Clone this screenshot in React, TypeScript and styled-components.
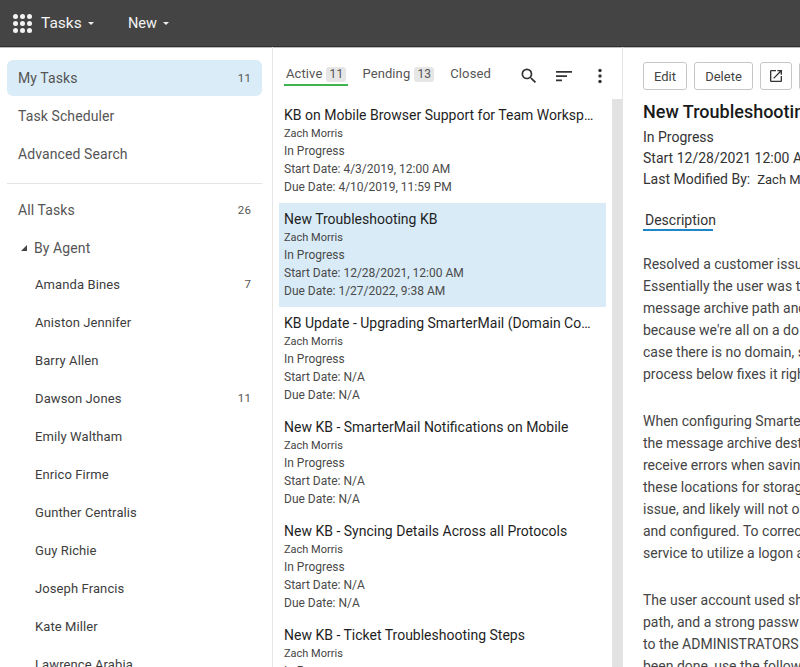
import React from "react";
import styled, { createGlobalStyle } from "styled-components";

const Global = createGlobalStyle`
  html, body { margin: 0; padding: 0; height: 100%; overflow: hidden; background: #fff; }
  body { font-family: Roboto, "Liberation Sans", sans-serif; }
  #root { height: 100%; }
  * { box-sizing: border-box; }
`;

const Page = styled.div`
  width: 800px; height: 667px; display: flex; flex-direction: column; overflow: hidden;
`;
const TopBar = styled.header`
  height: 47px; flex: none; background: #444; border-bottom: 1px solid #2f2f2f; box-shadow: 0 1px 0 #bbb;
  display: flex; align-items: center; padding-left: 13px; color: #fff;
`;
const Waffle = styled.svg`width: 19px; height: 19px; fill: #f2f2f2; margin-right: 9px;`;
const Menu = styled.div<{ $size: number; $width: number }>`
  display: flex; align-items: center; font-size: ${p => p.$size}px; width: ${p => p.$width}px; gap: 6px; color: #f4f4f4;
  &::after { content: ""; border: 3.5px solid transparent; border-top-color: #eee; border-bottom: 0; margin-top: 1px; }
`;
const Body = styled.div`flex: 1; display: flex; min-height: 0;`;

const Side = styled.aside`
  width: 273px; flex: none; border-right: 1px solid #e6e6e6; padding: 13px 10px 0 7px; overflow: hidden;
`;
const NavItem = styled.div<{ $active?: boolean; $indent?: number }>`
  height: 38px; display: flex; align-items: center; justify-content: space-between; flex: none;
  padding: 0 11px 0 ${p => p.$indent ?? 11}px; font-size: 14px; letter-spacing: 0.1px;
  color: #555;
  ${p => p.$active && `background: #d9ecf7; border-radius: 6px; height: 36px; margin-bottom: 1px;`}
`;
const AgentItem = styled(NavItem)`
  font-size: 13px; color: #3d3d3d; padding-left: 28px;
`;
const AgentGroup = styled.div`margin-top: -2px;`;
const Count = styled.span`font-size: 11.5px; color: #555;`;
const Divider = styled.hr`border: 0; border-top: 1px solid #e4e4e4; margin: 10px 0 7px;`;
const AgentLabel = styled.span`display: inline-flex; align-items: center; gap: 7px;`;
const Tri = styled.svg`width: 6px; height: 6px; fill: #444;`;

const ListPane = styled.section`
  width: 350px; flex: none; border-right: 1px solid #e6e6e6; display: flex; flex-direction: column; min-height: 0; position: relative;
`;
const TabsRow = styled.div`height: 52px; flex: none; display: flex; align-items: flex-start; padding: 19px 0 0 11px;`;
const Tab = styled.div<{ $active?: boolean; $gap: number }>`
  height: 20px; display: flex; align-items: flex-start; gap: 4px; padding: 0 2px; margin-right: ${p => p.$gap}px;
  font-size: 13px; line-height: 15px; letter-spacing: 0.1px; color: #555;
  border-bottom: 2px solid ${p => (p.$active ? "#3fb34f" : "transparent")};
`;
const TabCount = styled.span`
  background: #e6e6e6; border-radius: 3px; font-size: 12px; line-height: 15px; color: #555; width: 20px; text-align: center; margin-top: 1px;
`;
const Tools = styled.div`display: flex; align-items: center; margin-left: auto; padding-right: 12px;`;
const ToolIcon = styled.svg<{ $mr: number }>`width: 20px; height: 20px; fill: #333; display: block; margin-right: ${p => p.$mr}px;`;
const Rows = styled.div`flex: 1; overflow: hidden; padding: 0 16px 0 6px;`;
const Row = styled.article<{ $sel?: boolean }>`
  height: 104px; padding: 7px 10px 0 5px; background: ${p => (p.$sel ? "#d8ebf7" : "transparent")};
`;
const RowTitle = styled.div`font-size: 14px; line-height: 19px; color: #1f1f1f; white-space: nowrap; overflow: hidden; text-overflow: ellipsis;`;
const RowName = styled.div`font-size: 11px; line-height: 17px; color: #444;`;
const RowLine = styled.div`font-size: 12px; line-height: 18px; color: #4a4a4a;`;
const Track = styled.div`position: absolute; right: 0; top: 52px; bottom: 0; width: 10px; background: #e2e2e2;`;

const Detail = styled.section`flex: 1; min-width: 0; padding: 15px 0 0 20px; overflow: hidden;`;
const Buttons = styled.div`display: flex; gap: 7px; height: 28px;`;
const Btn = styled.button<{ $w: number }>`
  flex: none; width: ${p => p.$w}px; height: 28px; background: #fff; border: 1px solid #c6c6c6; border-radius: 3px; padding: 0;
  font: 400 13px Roboto, sans-serif; color: #444; display: flex; align-items: center; justify-content: center;
`;
const OpenIcon = styled.svg`width: 16px; height: 16px; fill: #333;`;
const Title = styled.h1`margin: 11px 0 0; font-size: 18px; line-height: 22px; font-weight: 500; color: #1a1a1a; white-space: nowrap;`;
const Meta = styled.div`font-size: 14px; line-height: 21px; color: #333; white-space: nowrap;`;
const MetaFirst = styled(Meta)`margin-top: 4px;`;
const Value = styled.span`margin-left: 7px; font-size: 13px;`;
const DescTab = styled.div`
  margin: 21px 0 22px; width: 70px; height: 20px; padding-left: 2px; font-size: 14px; line-height: 18px; color: #333; border-bottom: 2px solid #1f86c9; white-space: nowrap;
`;
const Para = styled.div`margin-bottom: 25px;`;
const ParaLine = styled.div`font-size: 14px; line-height: 22px; color: #444; white-space: nowrap;`;

const agents: [string, string?][] = [
  ["Amanda Bines", "7"], ["Aniston Jennifer"], ["Barry Allen"], ["Dawson Jones", "11"], ["Emily Waltham"],
  ["Enrico Firme"], ["Gunther Centralis"], ["Guy Richie"], ["Joseph Francis"], ["Kate Miller"], ["Lawrence Arabia"],
];
const tasks = [
  { t: "KB on Mobile Browser Support for Team Workspaces", s: "Start Date: 4/3/2019, 12:00 AM", d: "Due Date: 4/10/2019, 11:59 PM" },
  { t: "New Troubleshooting KB", s: "Start Date: 12/28/2021, 12:00 AM", d: "Due Date: 1/27/2022, 9:38 AM", sel: true },
  { t: "KB Update - Upgrading SmarterMail (Domain Controllers)", s: "Start Date: N/A", d: "Due Date: N/A" },
  { t: "New KB - SmarterMail Notifications on Mobile", s: "Start Date: N/A", d: "Due Date: N/A" },
  { t: "New KB - Syncing Details Across all Protocols", s: "Start Date: N/A", d: "Due Date: N/A" },
  { t: "New KB - Ticket Troubleshooting Steps", s: "Start Date: N/A", d: "Due Date: N/A" },
];
const paragraphs = [
  ["Resolved a customer issue", "Essentially the user was t", "message archive path and", "because we're all on a do", "case there is no domain, s", "process below fixes it righ"],
  ["When configuring Smarte", "the message archive dest", "receive errors when savin", "these locations for storag", "issue, and likely will not o", "and configured. To correc", "service to utilize a logon a"],
  ["The user account used sh", "path, and a strong passw", "to the ADMINISTRATORS", "been done, use the follow"],
];

export default function App() {
  return (
    <Page>
      <Global />
      <TopBar>
        <Waffle viewBox="0 0 19 19">
          {[2.5, 9.5, 16.5].flatMap(y => [2.5, 9.5, 16.5].map(x => <circle key={`${x}-${y}`} cx={x} cy={y} r="2.5" />))}
        </Waffle>
        <Menu $size={15.5} $width={87}>Tasks</Menu>
        <Menu $size={14.5} $width={60}>New</Menu>
      </TopBar>
      <Body>
        <Side>
          <NavItem $active><span>My Tasks</span><Count>11</Count></NavItem>
          <NavItem>Task Scheduler</NavItem>
          <NavItem>Advanced Search</NavItem>
          <Divider />
          <NavItem><span>All Tasks</span><Count>26</Count></NavItem>
          <NavItem $indent={14}>
            <AgentLabel><Tri viewBox="0 0 7 7"><path d="M7 0V7H0Z" /></Tri>By Agent</AgentLabel>
          </NavItem>
          <AgentGroup>
            {agents.map(([n, c]) => (
              <AgentItem key={n}><span>{n}</span>{c && <Count>{c}</Count>}</AgentItem>
            ))}
          </AgentGroup>
        </Side>
        <ListPane>
          <TabsRow>
            <Tab $active $gap={12}>Active<TabCount>11</TabCount></Tab>
            <Tab $gap={12}>Pending<TabCount>13</TabCount></Tab>
            <Tab $gap={0}>Closed</Tab>
            <Tools>
              <ToolIcon $mr={15} viewBox="0 0 24 24"><path d="M15.5 14h-.79l-.28-.27A6.471 6.471 0 0 0 16 9.5 6.5 6.5 0 1 0 9.5 16c1.61 0 3.09-.59 4.23-1.57l.27.28v.79l5 4.99L20.49 19l-4.99-5zm-6 0C7.01 14 5 11.99 5 9.5S7.01 5 9.5 5 14 7.01 14 9.5 11.99 14 9.5 14z" /></ToolIcon>
              <ToolIcon $mr={16} viewBox="0 0 20 20"><path d="M2 5h16v1.8H2zM2 9.2h11V11H2zM2 13.4h6v1.8H2z" /></ToolIcon>
              <ToolIcon $mr={0} viewBox="0 0 20 20"><circle cx="10" cy="4.5" r="1.7" /><circle cx="10" cy="10" r="1.7" /><circle cx="10" cy="15.5" r="1.7" /></ToolIcon>
            </Tools>
          </TabsRow>
          <Rows>
            {tasks.map(x => (
              <Row key={x.t} $sel={x.sel}>
                <RowTitle>{x.t}</RowTitle>
                <RowName>Zach Morris</RowName>
                <RowLine>In Progress</RowLine>
                <RowLine>{x.s}</RowLine>
                <RowLine>{x.d}</RowLine>
              </Row>
            ))}
          </Rows>
          <Track />
        </ListPane>
        <Detail>
          <Buttons>
            <Btn $w={44}>Edit</Btn>
            <Btn $w={59}>Delete</Btn>
            <Btn $w={32}><OpenIcon viewBox="0 0 24 24"><path d="M19 19H5V5h7V3H5a2 2 0 0 0-2 2v14a2 2 0 0 0 2 2h14c1.1 0 2-.9 2-2v-7h-2v7zM14 3v2h3.59l-9.83 9.83 1.41 1.41L19 6.41V10h2V3h-7z" /></OpenIcon></Btn>
            <Btn $w={32} />
          </Buttons>
          <Title>New Troubleshooting KB</Title>
          <MetaFirst>In Progress</MetaFirst>
          <Meta>Start 12/28/2021 12:00 AM</Meta>
          <Meta>Last Modified By:<Value>Zach Morris</Value></Meta>
          <DescTab>Description</DescTab>
          {paragraphs.map((p, i) => (
            <Para key={i}>{p.map(l => <ParaLine key={l}>{l}</ParaLine>)}</Para>
          ))}
        </Detail>
      </Body>
    </Page>
  );
}
